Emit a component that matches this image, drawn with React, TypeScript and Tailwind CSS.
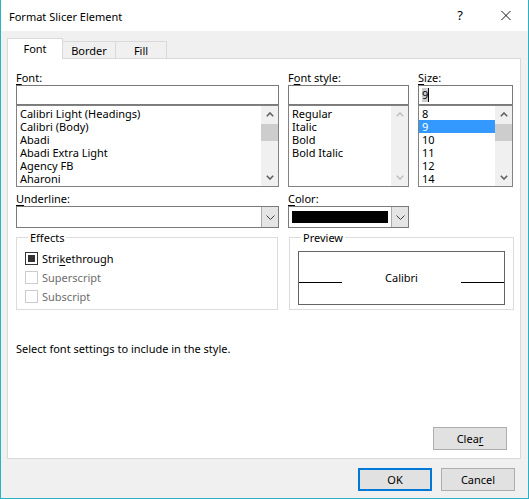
import React from 'react';

const font = "font-['Segoe_UI','Noto_Sans',sans-serif]";

const Arrow = ({ up, disabled }: { up?: boolean; disabled?: boolean }) => (
  <svg width="8" height="5" viewBox="0 0 8 5">
    <polyline
      points={up ? '0.8,4.2 4,1 7.2,4.2' : '0.8,0.8 4,4 7.2,0.8'}
      fill="none"
      stroke={disabled ? '#c0c0c0' : '#606060'}
      strokeWidth="1.6"
    />
  </svg>
);

const ScrollBar = ({ disabled, thumb }: { disabled?: boolean; thumb?: boolean }) => (
  <div className="w-[17px] h-full flex flex-col bg-[#f0f0f0] shrink-0">
    <div className="h-[17px] flex items-center justify-center">
      <Arrow up disabled={disabled} />
    </div>
    {thumb && <div className="h-[17px] mt-px bg-[#cdcdcd]" />}
    <div className="flex-1" />
    <div className="h-[17px] flex items-center justify-center">
      <Arrow disabled={disabled} />
    </div>
  </div>
);

const ComboArrow = () => (
  <div className="w-[17px] h-full bg-[#e5e5e5] border-l border-[#ababab] flex items-center justify-center">
    <svg width="9" height="5" viewBox="0 0 9 5">
      <polyline points="0.5,0.5 4.5,4.5 8.5,0.5" fill="none" stroke="#404040" strokeWidth="1" />
    </svg>
  </div>
);

const Label = ({ pre, u, post }: { pre?: string; u: string; post: string }) => (
  <div className="h-[15px] leading-[15px]">
    {pre}
    <span className="underline underline-offset-2">{u}</span>
    {post}
  </div>
);

const ListBox = ({
  items,
  selected,
  scrollDisabled,
  thumb,
}: {
  items: string[];
  selected?: number;
  scrollDisabled?: boolean;
  thumb?: boolean;
}) => (
  <div className="h-[82px] border border-[#828282] bg-white flex">
    <div className="flex-1 pt-px overflow-hidden">
      {items.map((it, i) => (
        <div
          key={it}
          className={`h-[13px] leading-[13px] pl-[3px] whitespace-nowrap ${
            i === selected ? 'bg-[#3399ff] text-white' : ''
          }`}
        >
          {it}
        </div>
      ))}
    </div>
    <ScrollBar disabled={scrollDisabled} thumb={thumb} />
  </div>
);

const CheckRow = ({
  checked,
  disabled,
  children,
}: {
  checked?: boolean;
  disabled?: boolean;
  children: React.ReactNode;
}) => (
  <div className="h-[19px] flex items-center gap-[4px]">
    <div
      className={`w-[13px] h-[13px] border flex items-center justify-center bg-white ${
        disabled ? 'border-[#cccccc]' : 'border-[#333333]'
      }`}
    >
      {checked && <div className="w-[7px] h-[7px] bg-[#333333]" />}
    </div>
    <span className={disabled ? 'text-[#6d6d6d]' : ''}>{children}</span>
  </div>
);

export default function App() {
  return (
    <div
      className={`${font} text-[11px] leading-[15px] text-black w-[529px] h-[499px] bg-[#f0f0f0] border-l border-r border-b border-[#2bb0c4] flex flex-col`}
    >
      {/* title bar */}
      <div className="h-[31px] bg-white flex items-center pl-[8px] shrink-0">
        <div className="flex-1 pt-px">Format Slicer Element</div>
        <div className="w-[20px] text-center mr-[31px] text-[13px]">?</div>
        <div className="w-[10px] mr-[17px] flex items-center">
          <svg width="11" height="11" viewBox="0 0 11 11">
            <path d="M0.5 0.5 L10.5 10.5 M10.5 0.5 L0.5 10.5" stroke="#000" strokeWidth="1" />
          </svg>
        </div>
      </div>

      <div className="pt-[7px] pl-[6px] flex flex-col">
        {/* tabs */}
        <div className="flex items-end h-[21px] -mb-px relative z-10">
          <div className="w-[56px] h-[21px] bg-white border-l border-t border-r border-[#d9d9d9] flex items-center justify-center pb-[2px]">
            Font
          </div>
          <div className="w-[54px] h-[18px] -ml-px bg-[#f0f0f0] border border-[#d9d9d9] flex items-center justify-center">
            Border
          </div>
          <div className="w-[52px] h-[18px] -ml-px bg-[#f0f0f0] border border-[#d9d9d9] flex items-center justify-center">
            Fill
          </div>
        </div>

        {/* panel */}
        <div className="w-[514px] h-[401px] bg-white border border-[#d9d9d9] pl-[8px] pt-[11px] flex flex-col">
          <div className="flex gap-[9px]">
            <div className="w-[263px]">
              <Label u="F" post="ont:" />
              <div className="h-[20px] border border-[#7a7a7a] bg-white" />
              <ListBox
                items={[
                  'Calibri Light (Headings)',
                  'Calibri (Body)',
                  'Abadi',
                  'Abadi Extra Light',
                  'Agency FB',
                  'Aharoni',
                ]}
                thumb
              />
            </div>
            <div className="w-[121px]">
              <Label pre="F" u="o" post="nt style:" />
              <div className="h-[20px] border border-[#7a7a7a] bg-white" />
              <ListBox items={['Regular', 'Italic', 'Bold', 'Bold Italic']} scrollDisabled />
            </div>
            <div className="w-[95px]">
              <Label u="S" post="ize:" />
              <div className="h-[20px] border border-[#7a7a7a] bg-white flex items-center pl-[3px]">
                <span className="bg-[#cccccc] leading-[14px]">9</span>
                <span className="w-px h-[14px] bg-black" />
              </div>
              <ListBox items={['8', '9', '10', '11', '12', '14']} selected={1} thumb />
            </div>
          </div>

          <div className="flex gap-[9px] mt-[4px]">
            <div className="w-[263px]">
              <Label u="U" post="nderline:" />
              <div className="h-[22px] border border-[#7a7a7a] bg-white flex justify-end">
                <ComboArrow />
              </div>
            </div>
            <div className="w-[121px]">
              <Label u="C" post="olor:" />
              <div className="h-[22px] border border-[#7a7a7a] bg-white flex items-center pl-[3px]">
                <div className="flex-1 h-[12px] bg-black mr-[3px]" />
                <ComboArrow />
              </div>
            </div>
          </div>

          <div className="flex gap-[11px] mt-[2px]">
            <fieldset className="w-[262px] h-[80px] border border-[#dcdcdc] pl-[8px]">
              <legend className="ml-[3px] px-[2px] leading-[15px]">Effects</legend>
              <div className="pt-[4px]">
                <CheckRow checked>
                  Stri<span className="underline underline-offset-2">k</span>ethrough
                </CheckRow>
                <CheckRow disabled>Superscript</CheckRow>
                <CheckRow disabled>Subscript</CheckRow>
              </div>
            </fieldset>
            <fieldset className="w-[225px] h-[80px] border border-[#dcdcdc] pl-[8px]">
              <legend className="ml-[3px] px-[2px] leading-[15px]">Preview</legend>
              <div className="mt-[6px] w-[207px] h-[54px] border border-[#646464] relative flex items-center justify-center">
                <div className="absolute left-0 top-[30px] w-[43px] h-px bg-black" />
                <div className="absolute right-0 top-[30px] w-[43px] h-px bg-black" />
                <span className="text-[11px] mb-[2px]">Calibri</span>
              </div>
            </fieldset>
          </div>

          <div className="mt-[31px]">Select font settings to include in the style.</div>

          <div className="mt-auto flex justify-end pr-[13px] pb-[8px]">
            <div className="w-[74px] h-[23px] bg-[#e1e1e1] border border-[#adadad] flex items-center justify-center">
              Clea<span className="underline underline-offset-2">r</span>
            </div>
          </div>
        </div>

        {/* buttons */}
        <div className="flex justify-end gap-[9px] pr-[13px] mt-[9px]">
          <div className="w-[74px] h-[23px] bg-[#e1e1e1] border-2 border-[#0078d7] flex items-center justify-center">
            OK
          </div>
          <div className="w-[74px] h-[23px] bg-[#e1e1e1] border border-[#adadad] flex items-center justify-center">
            Cancel
          </div>
        </div>
      </div>
    </div>
  );
}
